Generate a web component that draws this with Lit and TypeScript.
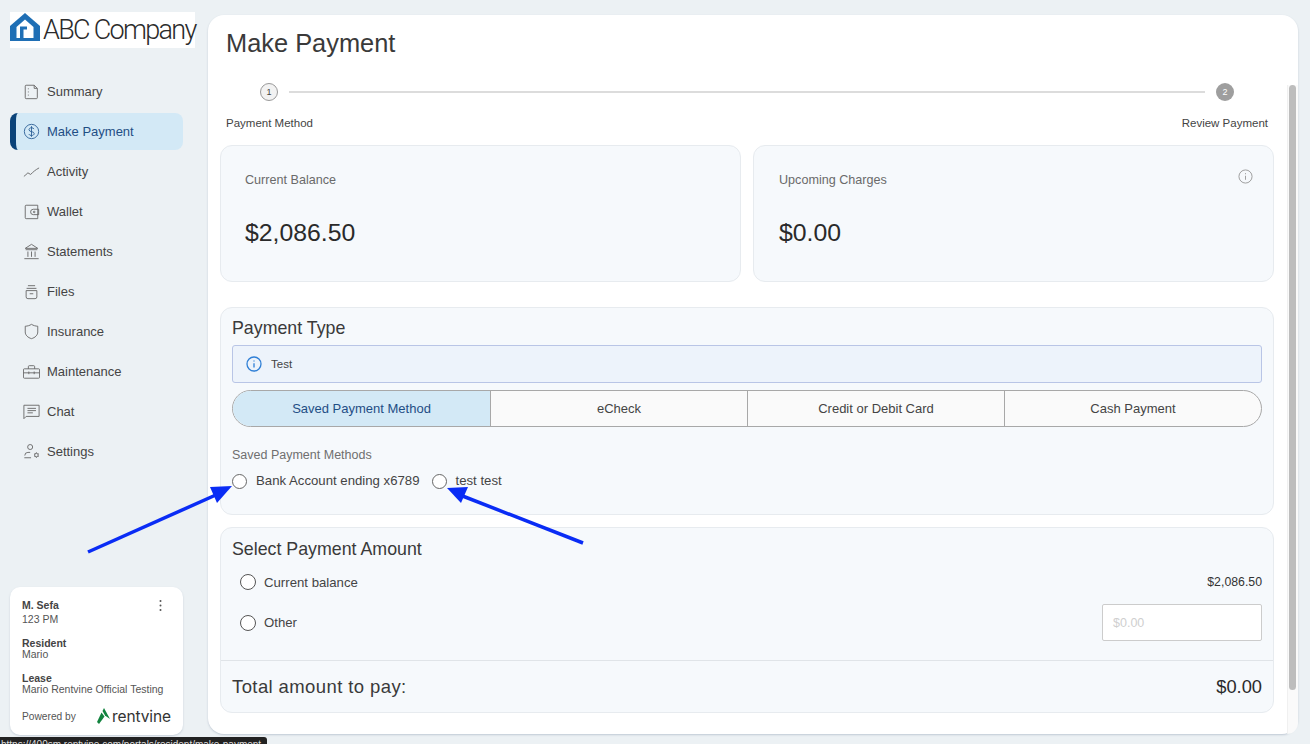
import { LitElement, css, html, svg } from 'lit';
import { customElement, state } from 'lit/decorators.js';

const navItems = [
    {
        label: 'Summary',
        icon: svg`<path d="M3.500 2.500h9l3.500 3.500v10.500a1 1 0 0 1-1 1H3.500a1 1 0 0 1-1-1v-13a1 1 0 0 1 1-1z"/><path d="M12.500 2.500V6H16M6 6v1M6 9.500v1M6 13v1"/>`,
    },
    {
        label: 'Make Payment',
        icon: svg`<circle cx="9.500" cy="9.500" r="8"/><path d="M12.300 6.800c-.5-1-1.500-1.500-2.800-1.500-1.600 0-2.800.9-2.800 2.200 0 3 5.800 1.400 5.800 4.300 0 1.300-1.300 2.200-3 2.200-1.400 0-2.500-.6-3-1.600M9.500 3.500v12"/>`,
    },
    {
        label: 'Activity',
        icon: svg`<path d="M1 15c1.500-1 3-2.800 4.500-4l3 1.800c2.800-2.700 5.500-5.300 9.500-7.300"/>`,
    },
    {
        label: 'Wallet',
        icon: svg`<path d="M16.500 2.500H3.500a1 1 0 0 0-1 1v13a1 1 0 0 0 1 1h13z"/><path d="M17.500 7h-6a2.700 2.700 0 0 0 0 6h6z"/><circle cx="12.500" cy="10" r=".9"/>`,
    },
    {
        label: 'Statements',
        icon: svg`<path d="M2.500 6 9.500 1.500 16.500 6zM3 7.500h13M5.500 9.500v6M9.500 9.500v6M13.500 9.500v6M1.500 17.500h16"/>`,
    },
    {
        label: 'Files',
        icon: svg`<path d="M5.500 3h8M4 6h11M3.500 8.500h12v7a2 2 0 0 1-2 2h-8a2 2 0 0 1-2-2zM7.500 12h4"/>`,
    },
    {
        label: 'Insurance',
        icon: svg`<path d="M9.500 1.500c2.200 1.400 4.500 2 7 2.100v6.400c0 3.600-2.900 6.300-7 7.500-4.100-1.200-7-3.900-7-7.500V3.600c2.500-.1 4.800-.7 7-2.100z"/>`,
    },
    {
        label: 'Maintenance',
        icon: svg`<path d="M1.500 6.500h16a1 1 0 0 1 1 1v8.500a1 1 0 0 1-1 1h-16a1 1 0 0 1-1-1V7.500a1 1 0 0 1 1-1zM6 6.500V4a1 1 0 0 1 1-1h5a1 1 0 0 1 1 1v2.500M.5 11h18M6.500 9.500v3M12.500 9.500v3"/>`,
    },
    {
        label: 'Chat',
        icon: svg`<path d="M1 2.500h17v12.500H3.500L1 17.500zM5 6h9.500M5 8.500h9.500M5 11h6"/>`,
    },
    {
        label: 'Settings',
        icon: svg`<circle cx="8" cy="4.500" r="2.800"/><path d="M8 10.500H5.500a3.500 3.500 0 0 0-3.500 3.500M1.500 16.500h7.500"/><circle cx="15" cy="13.500" r="2"/><path d="M15 10.500v1M15 15.500v1M12.400 12l.9.500M16.700 14.500l.9.500M12.400 15l.9-.500M16.700 12.500l.9-.500"/>`,
    },
];

const tabs = ['Saved Payment Method', 'eCheck', 'Credit or Debit Card', 'Cash Payment'];

@customElement('app-root')
export class AppRoot extends LitElement {
    @state() active = 'Make Payment';

    static styles = css`
        :host {
            display: block;
            position: relative;
            height: 744px;
            overflow: hidden;
            background: #ecf1f4;
            color: #444;
            font-family: 'Liberation Sans', Arial, sans-serif;
        }

        .layout {
            display: grid;
            grid-template-columns: 208px 1090px;
            height: 744px;
        }

        /* sidebar */
        .sidebar {
            display: flex;
            flex-direction: column;
            padding: 12px 25px 9px 10px;
            box-sizing: border-box;
        }

        .logo {
            display: flex;
            align-items: center;
            width: 185px;
            height: 36px;
            background: #fff;
        }

        .logo svg {
            flex: none;
            align-self: flex-start;
            margin: 1px 3px 0 0;
        }

        .logo span {
            font-family: Roboto, sans-serif;
            font-size: 27px;
            font-weight: 300;
            letter-spacing: -1.7px;
            color: #2b2b2b;
            white-space: nowrap;
        }

        nav {
            display: flex;
            flex-direction: column;
            gap: 3px;
            margin-top: 25px;
        }

        .nav-item {
            display: flex;
            align-items: center;
            gap: 7px;
            height: 37px;
            padding-left: 13px;
            border-radius: 8px;
            font-size: 13px;
            color: #444;
        }

        .nav-item svg {
            width: 17px;
            height: 17px;
            fill: none;
            stroke: #666;
            stroke-width: 1;
            flex: none;
        }

        .nav-item.active {
            padding-left: 7px;
            border-left: 6px solid #0a4379;
            background: #d3e9f6;
            color: #1f4e85;
        }

        .nav-item.active svg {
            stroke: #2c5f96;
        }

        .user-card {
            position: relative;
            margin-top: auto;
            height: 148px;
            box-sizing: border-box;
            padding: 11px 12px 0;
            background: #fff;
            border-radius: 10px;
            box-shadow: 0 1px 2px rgba(90, 110, 140, 0.25);
            font-size: 10.500px;
            color: #555;
        }

        .user-card b {
            display: block;
            color: #444;
            line-height: 12px;
        }

        .user-card p {
            margin: 0 0 12px;
            line-height: 11px;
            white-space: nowrap;
        }

        .user-card b.first {
            line-height: 14px;
        }

        .user-card p.first {
            margin-bottom: 11px;
            line-height: 14px;
        }

        .dots {
            position: absolute;
            top: 12px;
            right: 21px;
            width: 3px;
        }

        .powered {
            display: flex;
            align-items: center;
            justify-content: space-between;
            height: 20px;
            margin-top: -1px;
            font-size: 10.200px;
        }

        .rentvine {
            display: flex;
            align-items: center;
            gap: 2px;
            font-family: Inter, sans-serif;
            font-size: 15.500px;
            letter-spacing: -0.1px;
            color: #333;
        }

        /* main panel */
        .panel {
            position: relative;
            margin: 15px 0 10px;
            padding: 0 24px 0 12px;
            background: #fff;
            border-radius: 16px;
            box-shadow: 0 1px 2px rgba(90, 110, 140, 0.3);
        }

        h1 {
            margin: 0;
            padding: 12px 0 0 6px;
            height: 32px;
            font-size: 25.400px;
            line-height: 32px;
            font-weight: 400;
            color: #3a3a3a;
        }

        .stepper {
            display: flex;
            align-items: center;
            gap: 11px;
            margin-top: 24px;
            padding: 0 40px;
        }

        .step {
            display: flex;
            align-items: center;
            justify-content: center;
            flex: none;
            width: 18px;
            height: 18px;
            box-sizing: border-box;
            border-radius: 50%;
            border: 1px solid #999;
            background: #f2f2f2;
            font-size: 9px;
            color: #444;
        }

        .step.todo {
            border: none;
            background: #9e9e9e;
            color: #fff;
        }

        .step-line {
            flex: 1;
            height: 2px;
            background: #dcdcdc;
        }

        .step-labels {
            display: flex;
            justify-content: space-between;
            margin-top: 15px;
            padding: 0 6px;
            font-size: 11.500px;
            line-height: 14px;
            color: #444;
        }

        .balances {
            display: grid;
            grid-template-columns: 1fr 1fr;
            gap: 12px;
            margin-top: 15px;
        }

        .box {
            position: relative;
            box-sizing: border-box;
            background: #f6f9fc;
            border: 1px solid #e7ebef;
            border-radius: 12px;
        }

        .balance {
            height: 137px;
            padding: 26px 24px 0;
        }

        .balance:last-child {
            padding-left: 25px;
        }

        .balance .label {
            font-size: 12.600px;
            line-height: 16px;
            color: #6a6a6a;
        }

        .balance .amount {
            margin-top: 30px;
            font-size: 24.800px;
            line-height: 30px;
            color: #2a2a2a;
        }

        .info-corner {
            position: absolute;
            top: 23px;
            right: 20px;
        }

        .type {
            height: 208px;
            margin-top: 25px;
            padding: 10px 11px 0;
        }

        h2 {
            margin: 0;
            font-size: 17.800px;
            line-height: 20px;
            font-weight: 400;
            color: #3a3a3a;
        }

        .alert {
            display: flex;
            align-items: center;
            gap: 9px;
            height: 38px;
            box-sizing: border-box;
            margin-top: 7px;
            padding-left: 13px;
            background: #edf3fb;
            border: 1px solid #b9c5e6;
            border-radius: 3px;
            font-size: 11.500px;
            color: #444;
        }

        .tabs {
            display: grid;
            grid-template-columns: repeat(4, 1fr);
            height: 37px;
            box-sizing: border-box;
            margin-top: 7px;
            border: 1px solid #a8a8a8;
            border-radius: 19px;
            overflow: hidden;
            background: #fafafa;
        }

        .tab {
            display: flex;
            align-items: center;
            justify-content: center;
            border-left: 1px solid #a8a8a8;
            font-size: 13px;
            color: #444;
        }

        .tab:first-child {
            border-left: none;
        }

        .tab.active {
            background: #d3e9f6;
            color: #1f4e85;
        }

        .saved-title {
            margin-top: 21px;
            font-size: 12.500px;
            line-height: 15px;
            color: #6f6f6f;
        }

        .saved {
            display: flex;
            align-items: center;
            margin-top: 10px;
            font-size: 13.200px;
            line-height: 16px;
            color: #444;
        }

        .radio {
            flex: none;
            box-sizing: border-box;
            width: 15px;
            height: 15px;
            border: 1px solid #666;
            border-radius: 50%;
            background: #fff;
            margin-right: 9px;
        }

        .saved .radio:not(:first-child) {
            margin-left: 12px;
            margin-right: 9px;
        }

        .amount-box {
            display: flex;
            flex-direction: column;
            height: 186px;
            margin-top: 12px;
            padding-top: 11px;
        }

        .amount-box h2 {
            padding-left: 11px;
        }

        .amount-row {
            display: flex;
            align-items: center;
            justify-content: space-between;
            padding: 0 11px 0 19px;
            font-size: 13.200px;
            color: #444;
        }

        .amount-row .radio {
            width: 16px;
            height: 16px;
            border: 1.500px solid #555;
            margin-right: 8px;
        }

        .amount-row .left {
            display: flex;
            align-items: center;
        }

        .amount-row .value {
            font-size: 12.300px;
            color: #333;
        }

        .current {
            height: 20px;
            margin-top: 13px;
        }

        .other {
            height: 37px;
            margin-top: 12px;
        }

        .input {
            display: flex;
            align-items: center;
            width: 160px;
            height: 37px;
            box-sizing: border-box;
            padding-left: 10px;
            background: #fff;
            border: 1px solid #ccc;
            border-radius: 2px;
            font-size: 12.500px;
            color: #cfcfcf;
        }

        .total {
            display: flex;
            align-items: center;
            justify-content: space-between;
            flex: 1;
            margin-top: 19px;
            padding: 0 11px;
            border-top: 1px solid #e0e4e8;
            font-size: 18.500px;
            letter-spacing: 0.4px;
            color: #3a3a3a;
        }

        .total .sum {
            font-size: 18.300px;
            letter-spacing: 0;
            color: #2a2a2a;
        }

        .scrollbar {
            position: absolute;
            top: 70px;
            right: 0;
            bottom: 0;
            width: 10px;
            background: #fafafa;
            border-left: 1px solid #f0f0f0;
            border-bottom-right-radius: 16px;
        }

        .scrollbar div {
            width: 7px;
            height: 605px;
            border-radius: 4px;
            background: #bdbdbd;
            margin-left: 1px;
        }

        .arrows {
            position: absolute;
            inset: 0;
            pointer-events: none;
        }

        .status {
            position: absolute;
            left: 0;
            top: 737px;
            width: 267px;
            height: 16px;
            padding-left: 1px;
            box-sizing: border-box;
            white-space: nowrap;
            overflow: hidden;
            background: #222;
            border-radius: 0 3px 0 0;
            font-size: 10px;
            line-height: 16px;
            color: #ddd;
        }
    `;

    info(size: number, color: string, width: number) {
        return html`<svg width=${size} height=${size} viewBox="0 0 16 16" fill="none" stroke=${color} stroke-width=${width}>
            <circle cx="8" cy="8" r="7"/><path d="M8 7.200v4.300M8 4.400v1.200"/>
        </svg>`;
    }

    render() {
        return html`
            <div class="layout">
                <aside class="sidebar">
                    <div class="logo">
                        <svg width="30" height="28" viewBox="0 0 30 28">
                            <path fill="#1f6fb5" d="M15 0 30 13v15H0V13z"/>
                            <path fill="#fff" d="M6.500 25V14L15 6.500l8.500 7.500v11z"/>
                            <path fill="#1f6fb5" d="M10 25V13.500h7v3h-3.500V25z"/>
                        </svg>
                        <span>ABC Company</span>
                    </div>
                    <nav>
                        ${navItems.map(
                            (item) => html`<div class="nav-item ${item.label === this.active ? 'active' : ''}">
                                <svg viewBox="0 0 19 19">${item.icon}</svg>
                                <span>${item.label}</span>
                            </div>`
                        )}
                    </nav>
                    <div class="user-card">
                        <svg class="dots" height="13" viewBox="0 0 3 13" fill="#555">
                            <circle cx="1.500" cy="2" r="1"/><circle cx="1.500" cy="6.500" r="1"/><circle cx="1.500" cy="11" r="1"/>
                        </svg>
                        <b class="first">M. Sefa</b>
                        <p class="first">123 PM</p>
                        <b>Resident</b>
                        <p>Mario</p>
                        <b>Lease</b>
                        <p>Mario Rentvine Official Testing</p>
                        <div class="powered">
                            <span>Powered by</span>
                            <span class="rentvine">
                                <svg width="13" height="16" viewBox="0 0 13 16">
                                    <path fill="#12833f" d="M7 0l6 11-5-3.500L5.500 3z"/>
                                    <path fill="#12833f" d="M4.500 4.500 7.500 8.500 2 16 0 14z"/>
                                </svg>
                                rentvine
                            </span>
                        </div>
                    </div>
                </aside>

                <main class="panel">
                    <h1>Make Payment</h1>
                    <div class="stepper">
                        <div class="step">1</div>
                        <div class="step-line"></div>
                        <div class="step todo">2</div>
                    </div>
                    <div class="step-labels">
                        <span>Payment Method</span>
                        <span>Review Payment</span>
                    </div>

                    <section class="balances">
                        <div class="box balance">
                            <div class="label">Current Balance</div>
                            <div class="amount">$2,086.50</div>
                        </div>
                        <div class="box balance">
                            <div class="label">Upcoming Charges</div>
                            <div class="amount">$0.00</div>
                            <span class="info-corner">${this.info(15, '#9a9a9a', 1)}</span>
                        </div>
                    </section>

                    <section class="box type">
                        <h2>Payment Type</h2>
                        <div class="alert">${this.info(16, '#2f7fd6', 1.300)}<span>Test</span></div>
                        <div class="tabs">
                            ${tabs.map((t, i) => html`<div class="tab ${i === 0 ? 'active' : ''}">${t}</div>`)}
                        </div>
                        <div class="saved-title">Saved Payment Methods</div>
                        <div class="saved">
                            <span class="radio"></span><span>Bank Account ending x6789</span>
                            <span class="radio"></span><span>test test</span>
                        </div>
                    </section>

                    <section class="box amount-box">
                        <h2>Select Payment Amount</h2>
                        <div class="amount-row current">
                            <span class="left"><span class="radio"></span>Current balance</span>
                            <span class="value">$2,086.50</span>
                        </div>
                        <div class="amount-row other">
                            <span class="left"><span class="radio"></span>Other</span>
                            <div class="input">$0.00</div>
                        </div>
                        <div class="total">
                            <span>Total amount to pay:</span>
                            <span class="sum">$0.00</span>
                        </div>
                    </section>

                    <div class="scrollbar"><div></div></div>
                </main>
            </div>

            <svg class="arrows" width="1310" height="744" viewBox="0 0 1310 744">
                <path d="M88 552 218 494" stroke="#0a2cf5" stroke-width="3.500" fill="none"/>
                <path d="M232 486 210 487 217 503z" fill="#0a2cf5"/>
                <path d="M583 543 460 495" stroke="#0a2cf5" stroke-width="3.500" fill="none"/>
                <path d="M447 488 468 487 461 503z" fill="#0a2cf5"/>
            </svg>
            <div class="status">https://400sm.rentvine.com/portals/resident/make-payment</div>
        `;
    }
}
